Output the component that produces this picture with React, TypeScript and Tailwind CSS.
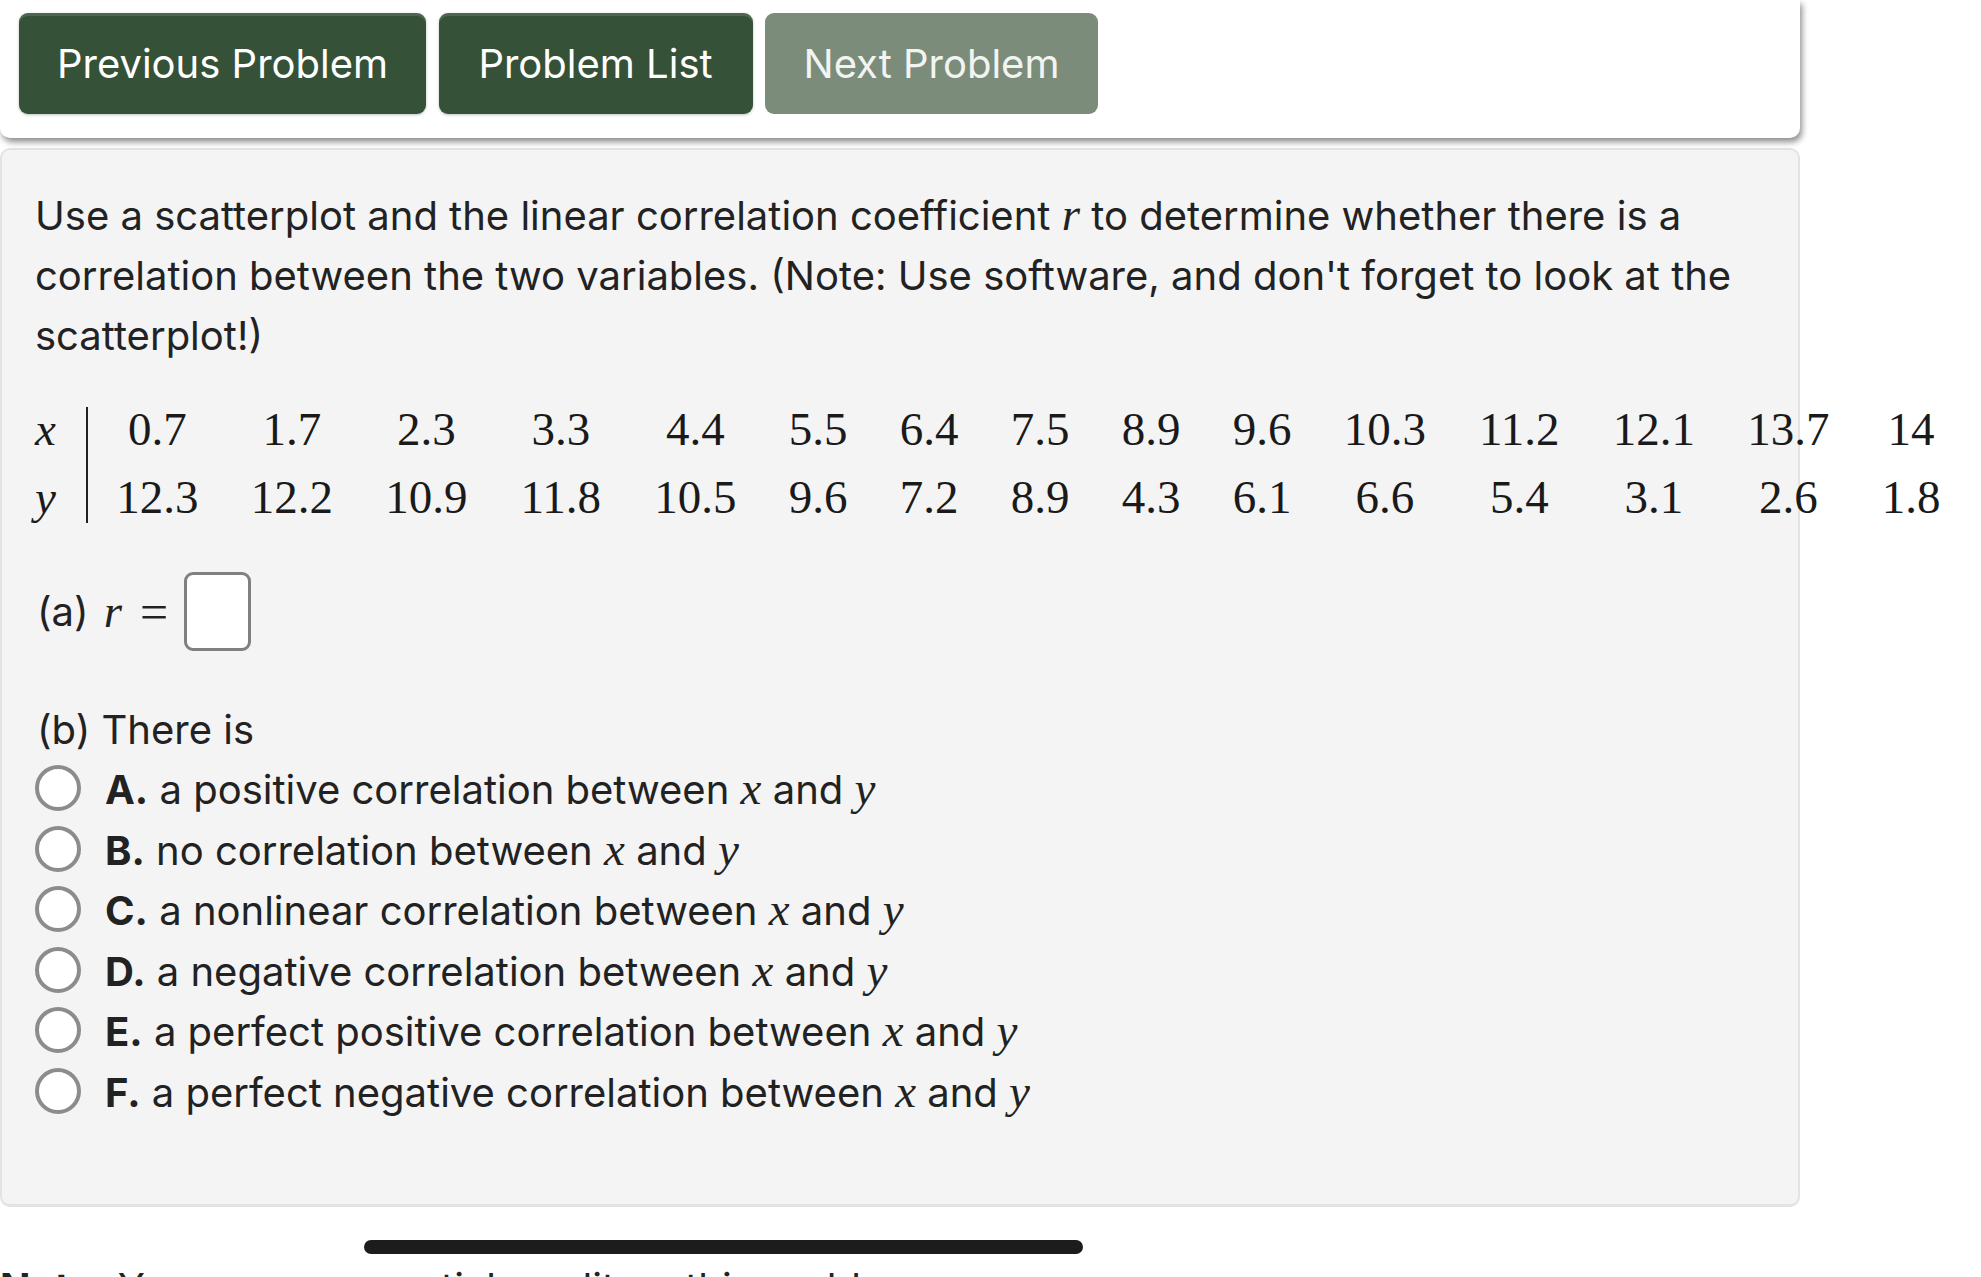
import React from "react";

const xs = ["0.7", "1.7", "2.3", "3.3", "4.4", "5.5", "6.4", "7.5", "8.9", "9.6", "10.3", "11.2", "12.1", "13.7", "14"];
const ys = ["12.3", "12.2", "10.9", "11.8", "10.5", "9.6", "7.2", "8.9", "4.3", "6.1", "6.6", "5.4", "3.1", "2.6", "1.8"];
const wide = [true, true, true, true, true, false, false, false, false, false, true, true, true, true, false];

function MathI({ children }: { children: React.ReactNode }) {
  return <span className="font-['Liberation_Serif',serif] italic text-[47px] leading-none">{children}</span>;
}

const options: { letter: string; text: string }[] = [
  { letter: "A.", text: "a positive correlation between" },
  { letter: "B.", text: "no correlation between" },
  { letter: "C.", text: "a nonlinear correlation between" },
  { letter: "D.", text: "a negative correlation between" },
  { letter: "E.", text: "a perfect positive correlation between" },
  { letter: "F.", text: "a perfect negative correlation between" },
];

export default function App() {
  return (
    <div className="w-[1981px] h-[1277px] overflow-hidden bg-white font-['Inter',sans-serif] text-[#222222]">
      {/* top nav card */}
      <div className="w-[1800px] h-[138px] bg-white rounded-b-[10px] shadow-[2px_4px_6px_rgba(0,0,0,0.45)] flex items-start gap-[12.5px] pl-[19px] pt-[13px] relative z-10">
        <button className="w-[407px] h-[101px] rounded-[9px] bg-[#355137] text-white text-[40px] shadow-[inset_0_3px_0_rgba(255,255,255,0.13),0_1px_3px_rgba(0,0,0,0.25)]">
          Previous Problem
        </button>
        <button className="w-[314px] h-[101px] rounded-[9px] bg-[#355137] text-white text-[40px] shadow-[inset_0_3px_0_rgba(255,255,255,0.13),0_1px_3px_rgba(0,0,0,0.25)]">
          Problem List
        </button>
        <button className="w-[333px] h-[101px] rounded-[9px] bg-[#7b8c7b] text-[#f2f4f2] text-[40px]">
          Next Problem
        </button>
      </div>

      {/* problem card */}
      <div className="mt-[10px] w-[1800px] h-[1059px] box-border bg-[#f4f4f4] border-2 border-b-[3px] border-[#e3e3e3] rounded-[10px] px-[33px] pt-[35.5px]">
        <p className="text-[40px] leading-[60px]">
          Use a scatterplot and the linear correlation coefficient <MathI>r</MathI> to determine whether there is a
          correlation between the two variables. (Note: Use software, and don't forget to look at the scatterplot!)
        </p>

        {/* data table */}
        <div className="mt-[29px] flex font-['Liberation_Serif',serif] text-[47px] text-[#1a1a1a]">
          <div className="w-[51px] shrink-0 flex flex-col italic">
            <div className="h-[68px] leading-[68px]">x</div>
            <div className="h-[68px] leading-[68px]">y</div>
          </div>
          <div className="w-[2px] shrink-0 bg-[#222222] mt-[12.5px] mb-[7.5px]" />
          <div className="flex pl-[2px]">
            {xs.map((x, i) => (
              <div key={i} className={(wide[i] ? "w-[134.5px]" : "w-[111px]") + " shrink-0 flex flex-col text-center"}>
                <div className="h-[68px] leading-[68px]">{x}</div>
                <div className="h-[68px] leading-[68px]">{ys[i]}</div>
              </div>
            ))}
          </div>
        </div>

        {/* (a) */}
        <div className="mt-[41.5px] flex items-center h-[79px]">
          <span className="text-[40px] leading-[60px] pl-[2px]">(a)</span>
          <span className="ml-[15px] font-['Liberation_Serif',serif] italic text-[47px] leading-none">r</span>
          <span className="ml-[18px] font-['Liberation_Serif',serif] text-[50px] leading-none">=</span>
          <div className="ml-[16px] w-[67px] h-[79px] box-border rounded-[9px] border-[3px] border-[#808080] bg-white" />
        </div>

        {/* (b) */}
        <div className="mt-[49px] text-[40px] leading-[60px] pl-[2px]">(b) There is</div>
        <div className="flex flex-col">
          {options.map((o) => (
            <div key={o.letter} className="h-[60.5px] flex items-start">
              <div className="mt-[5px] w-[46px] h-[46px] shrink-0 box-border rounded-full border-[4px] border-[#8c8c8c] bg-white" />
              <div className="ml-[24px] text-[40px] leading-[60px] whitespace-nowrap">
                <span className="font-bold">{o.letter}</span> {o.text} <MathI>x</MathI> and <MathI>y</MathI>
              </div>
            </div>
          ))}
        </div>
      </div>

      {/* home indicator */}
      <div className="mt-[33px] ml-[364px] w-[719px] h-[14px] rounded-full bg-[#1c1c1c]" />

      {/* bottom note */}
      <div className="mt-[4px] text-[40px] leading-[60px] whitespace-nowrap">
        <span className="font-bold">Note:</span> You can earn partial credit on this problem.
      </div>
    </div>
  );
}
